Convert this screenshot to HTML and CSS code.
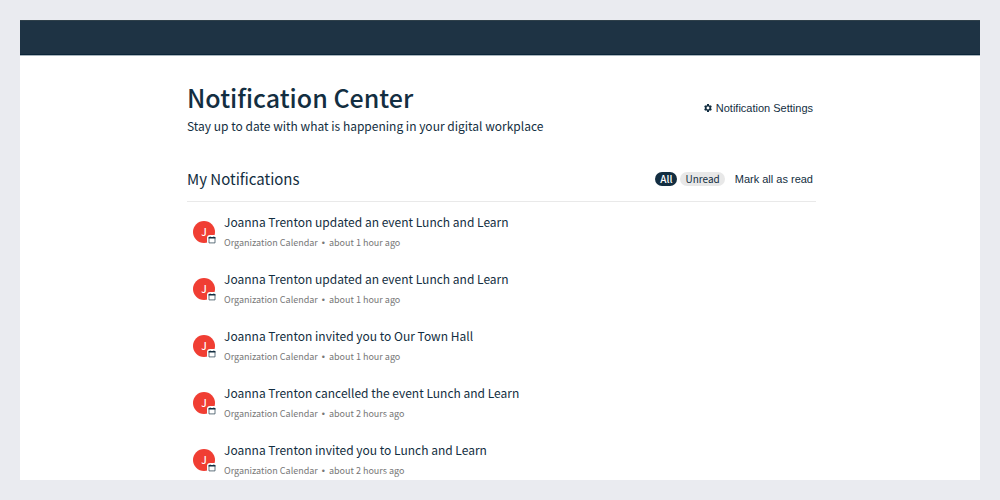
FILE: index.html
```html
<!DOCTYPE html>
<html lang="en">
<head>
    <meta charset="UTF-8" />
    <meta name="viewport" content="width=device-width, initial-scale=1.0" />
    <title>Notification Center</title>
    <link rel="stylesheet" href="styles.css">
    <script>
        const notifications = [
            { name: "Joanna Trenton", text: "updated an event Lunch and Learn", source: "Organization Calendar", time: "about 1 hour ago" },
            { name: "Joanna Trenton", text: "updated an event Lunch and Learn", source: "Organization Calendar", time: "about 1 hour ago" },
            { name: "Joanna Trenton", text: "invited you to Our Town Hall", source: "Organization Calendar", time: "about 1 hour ago" },
            { name: "Joanna Trenton", text: "cancelled the event Lunch and Learn", source: "Organization Calendar", time: "about 2 hours ago" },
            { name: "Joanna Trenton", text: "invited you to Lunch and Learn", source: "Organization Calendar", time: "about 2 hours ago" }
        ];

        document.addEventListener("DOMContentLoaded", () => {
            const list = document.getElementById("notification-list");

            notifications.forEach(item => {
                const row = document.createElement("li");
                row.className = "notification";
                row.innerHTML = `
                    <div class="avatar">${item.name[0]}
                        <span class="avatar-badge">
                            <svg viewBox="0 0 8 8" width="8" height="8">
                                <path d="M1 1.500h6v5.400H1z" fill="#fff" stroke="#3a5060" stroke-width=".8"/>
                                <path d="M.6 1h6.800v1.500H.6zM1.700.4h.9v1h-.9zM5.400.4h.9v1h-.9z" fill="#132e41"/>
                            </svg>
                        </span>
                    </div>
                    <div>
                        <a class="notification-title" href="#">${item.name} ${item.text}</a>
                        <p class="notification-meta">${item.source}<span class="dot">•</span>${item.time}</p>
                    </div>
                `;
                list.appendChild(row);
            });
        });
    </script>
</head>
<body>
    <div class="window">
        <nav class="navbar"></nav>

        <main class="main-content">
            <header class="page-header">
                <div>
                    <h1>Notification Center</h1>
                    <p class="subtitle">Stay up to date with what is happening in your digital workplace</p>
                </div>
                <button class="link-btn settings-btn">
                    <svg viewBox="2 2 20 20" width="8" height="8">
                        <path fill="#132e41" fill-rule="evenodd" d="M19.4 13a7.800 7.800 0 0 0 0-2l2.300-1.800-2.400-4.200-2.800 1.100a8 8 0 0 0-1.700-1L14.400 2H9.600l-.4 3.100a8 8 0 0 0-1.700 1L4.700 5 2.300 9.200 4.600 11a7.800 7.800 0 0 0 0 2l-2.300 1.800L4.700 19l2.800-1.100a8 8 0 0 0 1.700 1l.4 3.100h4.800l.4-3.100a8 8 0 0 0 1.700-1l2.800 1.100 2.400-4.200zM12 15.600a3.600 3.600 0 1 1 0-7.200 3.600 3.600 0 0 1 0 7.200z"/>
                    </svg>
                    Notification Settings
                </button>
            </header>

            <section>
                <div class="section-header">
                    <h2>My Notifications</h2>
                    <div class="filters">
                        <button class="pill active">All</button>
                        <button class="pill">Unread</button>
                        <button class="link-btn mark-btn">Mark all as read</button>
                    </div>
                </div>
                <ul id="notification-list" class="notification-list"></ul>
            </section>
        </main>
    </div>
</body>
</html>
```
FILE: styles.css
```css
:root {
    --bg-color: #eaebf0;
    --nav-bg: #1e3344;
    --text-color: #132e41;
    --muted-color: #777777;
    --line-color: #e9e9e9;
    --avatar-color: #f03e33;
}
* {
    box-sizing: border-box;
}
body {
    font-family: "Noto Sans CJK SC", "Open Sans", sans-serif;
    margin: 0;
    padding: 20px;
    height: 100vh;
    background: var(--bg-color);
    color: var(--text-color);
}
h1, h2, p, ul {
    margin: 0;
    padding: 0;
}
button {
    border: none;
    padding: 0;
    cursor: pointer;
    color: var(--text-color);
}
.window {
    height: 100%;
    overflow: hidden;
    background: #fff;
}
.navbar {
    height: 35px;
    background: var(--nav-bg);
    border-top: 1px solid #2f404a;
    border-bottom: 1px solid #0b2538;
    box-shadow: 0 1px 0 #a9b5bd;
}
.main-content {
    padding: 24px 164px 0 167px;
}
.page-header {
    display: flex;
    justify-content: space-between;
    align-items: center;
    padding-right: 3px;
}
h1 {
    font-size: 25px;
    line-height: 36px;
    font-weight: 500;
}
.subtitle {
    font-size: 12px;
    line-height: 22px;
}
.link-btn {
    display: flex;
    align-items: center;
    background: none;
    font-family: "Liberation Sans", Arial, sans-serif;
    font-size: 11px;
    line-height: 16px;
}
.settings-btn {
    gap: 4px;
}
.mark-btn {
    margin-left: 7px;
}
.section-header {
    display: flex;
    justify-content: space-between;
    align-items: center;
    margin-top: 20px;
    padding-right: 3px;
    height: 45px;
    border-bottom: 1px solid var(--line-color);
}
h2 {
    font-size: 15px;
    line-height: 20px;
    font-weight: 400;
}
.filters {
    display: flex;
    align-items: center;
    gap: 3px;
}
.pill {
    padding: 0 5px;
    border-radius: 7px;
    background: #e8e8e8;
    font-family: inherit;
    font-size: 10px;
    line-height: 14px;
}
.pill.active {
    background: var(--text-color);
    color: #fff;
    font-weight: 500;
}
.notification-list {
    list-style: none;
    padding-top: 1px;
}
.notification {
    display: flex;
    align-items: center;
    gap: 9px;
    height: 57px;
    padding-left: 6px;
}
.avatar {
    position: relative;
    width: 22px;
    height: 22px;
    border-radius: 50%;
    background: var(--avatar-color);
    color: #fff;
    font-size: 10px;
    font-weight: 500;
    line-height: 22px;
    text-align: center;
}
.avatar-badge {
    position: absolute;
    right: -2px;
    bottom: -2px;
    display: flex;
    align-items: center;
    justify-content: center;
    width: 10px;
    height: 10px;
    border-radius: 3px;
    background: #fff;
}
.notification-title {
    display: block;
    color: var(--text-color);
    font-size: 12px;
    line-height: 22px;
    text-decoration: none;
}
.notification-meta {
    color: var(--muted-color);
    font-size: 9px;
    line-height: 20px;
}
.dot {
    margin: 0 4px;
    font-family: "Liberation Sans", Arial, sans-serif;
}
```
